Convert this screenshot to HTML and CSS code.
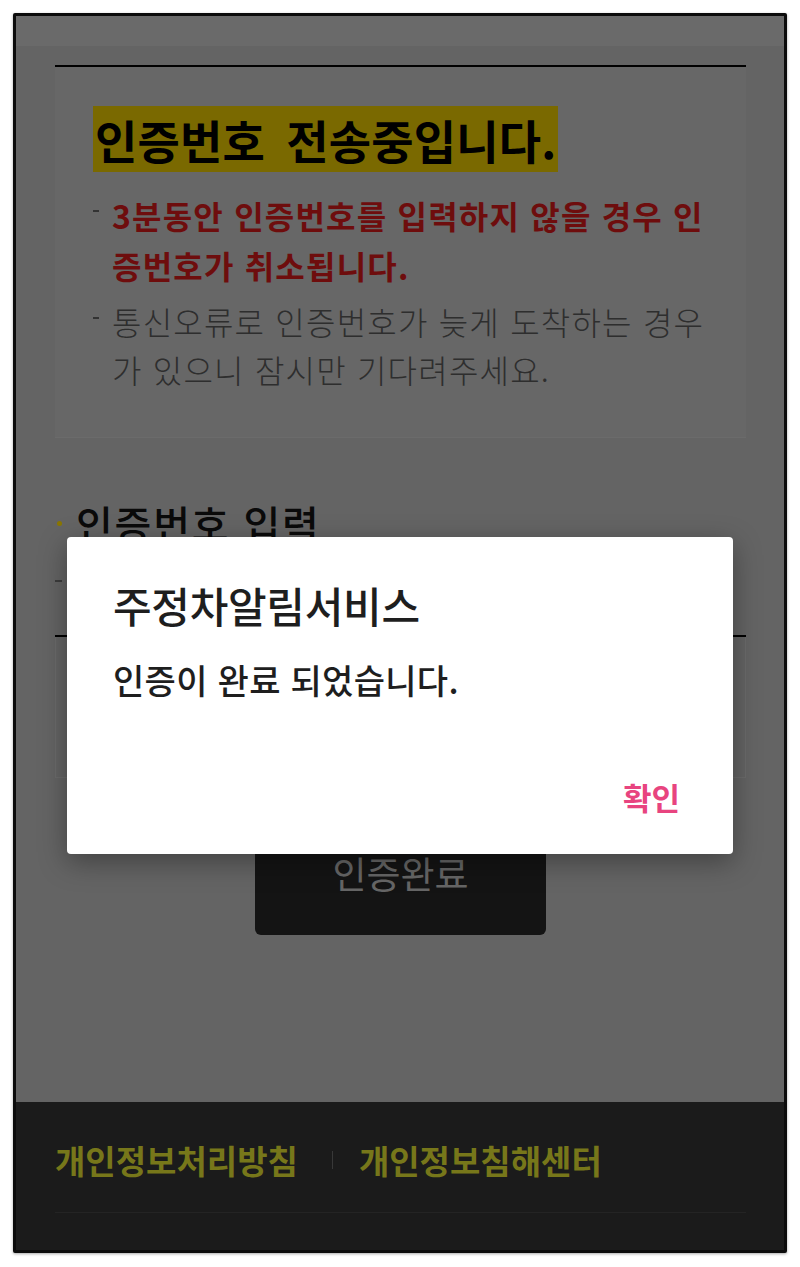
FILE: index.html
```html
<!DOCTYPE html>
<html lang="ko">
<head>
<meta charset="utf-8">
<title>주정차알림서비스 - 인증</title>
<link rel="stylesheet" href="styles.css">
</head>
<body>
<div class="frame">
  <div class="topbar"></div>
  <main class="main">
    <section class="notice">
      <h2 class="notice-title"><span class="hl">인증번호 전송중입니다.</span></h2>
      <ul class="notice-list">
        <li class="item item-warn">3분동안 인증번호를 입력하지 않을 경우 인증번호가 취소됩니다.</li>
        <li class="item item-info">통신오류로 인증번호가 늦게 도착하는 경우가 있으니 잠시만 기다려주세요.</li>
      </ul>
    </section>

    <h3 class="sec-title"><span class="dot"></span>인증번호 입력</h3>
    <div class="sec-desc"><span class="dash"></span></div>
    <div class="form">
      <div class="input-box"></div>
    </div>
    <div class="btn-row">
      <button class="btn-done" type="button">인증완료</button>
    </div>
  </main>
  <footer class="footer">
    <nav class="foot-links">
      <a class="foot-link">개인정보처리방침</a>
      <span class="foot-sep"></span>
      <a class="foot-link">개인정보침해센터</a>
    </nav>
    <div class="foot-line"></div>
  </footer>

  <div class="dialog" role="dialog">
    <div class="dlg-title">주정차알림서비스</div>
    <div class="dlg-msg">인증이 완료 되었습니다.</div>
    <div class="dlg-actions"><span class="dlg-ok">확인</span></div>
  </div>
</div>
</body>
</html>
```

FILE: styles.css
```css
* { box-sizing: border-box; }
html, body { margin: 0; padding: 0; }
body {
  background: #ffffff;
  font-family: "Noto Sans CJK KR", "Noto Sans", sans-serif;
}
.frame {
  position: relative;
  margin: 13px;
  width: 774px;
  height: 1240px;
  border: 3px solid #0b0b0b;
  border-radius: 2px;
  background: #646464;
  box-shadow: 0 1px 3px rgba(0,0,0,0.35);
  overflow: hidden;
  display: flex;
  flex-direction: column;
}
.topbar { height: 30px; background: #6a6a6a; flex: none; }
.main { padding: 0 38px 0 39px; flex: 1; }

.notice {
  margin-top: 19px;
  border-top: 2px solid #000;
  background: #676767;
  border-bottom: 1px solid #6b6b6b;
  padding: 39px 20px 44px 38px;
}
.notice-title {
  margin: 0;
  font-size: 46px;
  line-height: 66px;
  font-weight: 700;
  letter-spacing: 0.2px;
  word-spacing: 8px;
  color: #000;
}
.hl { background: #7a6900; padding: 0 2px; }
.notice-list { list-style: none; margin: 18px 0 0; padding: 0; }
.item {
  position: relative;
  padding-left: 19px;
  font-size: 32px;
  line-height: 50px;
  letter-spacing: 1.2px;
}
.item::before {
  content: "";
  position: absolute;
  left: 0;
  top: 20px;
  width: 6px;
  height: 2px;
  background: #333;
}
.item-warn { color: #6e0d0d; font-weight: 700; }
.item-info { color: #2e2e2e; font-weight: 300; margin-top: 7px; line-height: 48px; }

.sec-title {
  margin: 60px 0 0;
  font-size: 40px;
  line-height: 50px;
  font-weight: 500;
  letter-spacing: 1.8px;
  color: #0a0a0a;
  display: flex;
  align-items: center;
}
.dot {
  width: 5px; height: 5px; border-radius: 50%;
  background: #8a7600;
  margin: 0 14px 0 2px;
}
.sec-desc {
  margin-top: 15px;
  height: 36px;
  display: flex;
  align-items: center;
}
.dash { width: 7px; height: 2px; background: #3c3c3c; }
.form { margin-top: 36px; border-top: 2px solid #000; }
.input-box {
  height: 141px;
  border: 1px solid #6b6b6b;
  border-top: none;
}
.btn-row { display: flex; justify-content: center; margin-top: 62px; }
.btn-done {
  width: 291px;
  height: 95px;
  border: none;
  border-radius: 6px;
  background: #141414;
  color: #666666;
  font-family: inherit;
  font-size: 37px;
  font-weight: 400;
  padding: 0 0 30px;
}

.footer {
  flex: none;
  height: 148px;
  background: #1b1b1b;
  padding: 37px 38px 0 39px;
}
.foot-links { display: flex; align-items: center; height: 42px; }
.foot-link {
  font-size: 33px;
  font-weight: 700;
  color: #77771a;
}
.foot-sep { width: 1px; height: 18px; background: #383838; margin: 0 26px 0 34px; }
.foot-line { margin-top: 31px; border-top: 1px solid #242424; }

.dialog {
  position: absolute;
  left: 51px;
  top: 521px;
  width: 666px;
  height: 317px;
  background: #fff;
  border-radius: 4px;
  box-shadow: 0 8px 28px rgba(0,0,0,0.35);
  padding: 43px 53px 0 46px;
}
.dlg-title {
  font-size: 42px;
  line-height: 50px;
  font-weight: 500;
  letter-spacing: -0.3px;
  color: #1e1e1e;
}
.dlg-msg {
  margin-top: 30px;
  font-size: 34px;
  line-height: 40px;
  font-weight: 500;
  letter-spacing: 0.3px;
  color: #1e1e1e;
}
.dlg-actions { margin-top: 77px; display: flex; justify-content: flex-end; }
.dlg-ok {
  font-size: 31px;
  line-height: 40px;
  font-weight: 700;
  color: #e8447f;
}
```
